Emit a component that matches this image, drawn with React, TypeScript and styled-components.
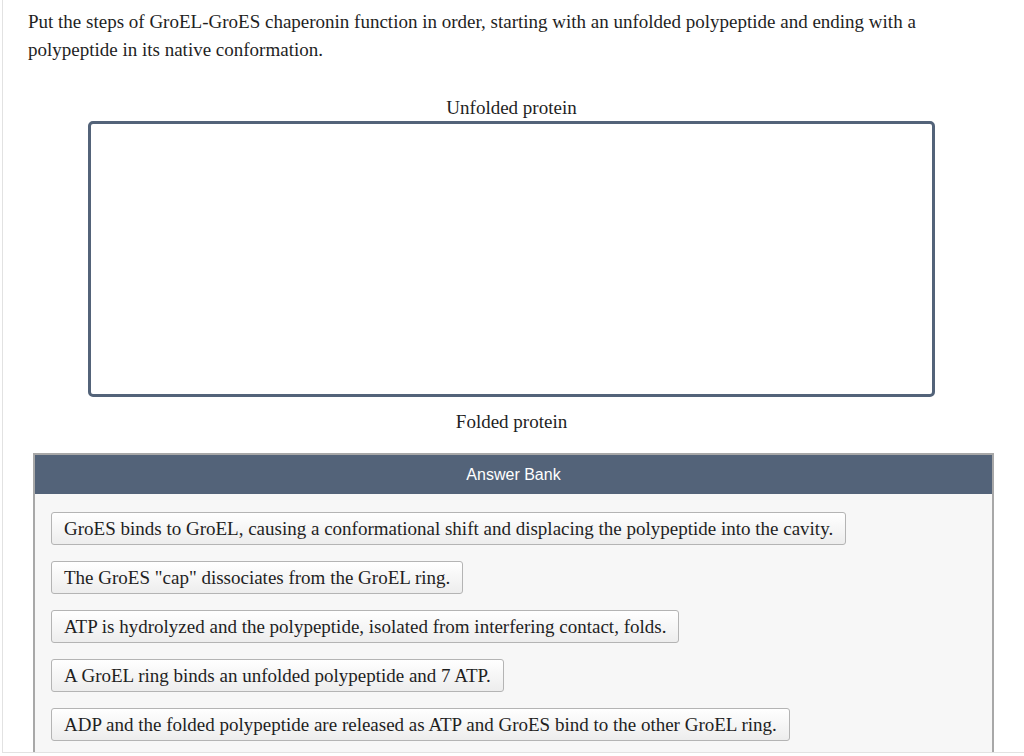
import styled, { createGlobalStyle } from "styled-components";

const GlobalStyle = createGlobalStyle`
  html, body {
    margin: 0;
    padding: 0;
    background: #ffffff;
  }
  body {
    font-family: "Liberation Serif", "Times New Roman", serif;
    color: #1f1f1f;
  }
`;

const colors = {
  slate: "#536379",
  bankBorder: "#a8a8a8",
  bankBg: "#f7f7f7",
  pageLine: "#e2e2e2",
  buttonBorder: "#b4b4b4",
};

const Page = styled.div`
  margin-left: 2px;
  height: 753px;
  box-sizing: border-box;
  border-left: 1px solid ${colors.pageLine};
  border-bottom: 1px solid ${colors.pageLine};
  padding: 8px 29px 0 25px;
  overflow: hidden;
`;

const Question = styled.p`
  margin: 0;
  font-size: 19px;
  line-height: 28px;
  max-width: 905px;
`;

const Label = styled.div`
  text-align: center;
  font-size: 19px;
  line-height: 22px;
`;

const TopLabel = styled(Label)`
  margin-top: 33px;
`;

const BottomLabel = styled(Label)`
  margin-top: 14px;
`;

const DropZone = styled.div`
  width: 847px;
  height: 276px;
  box-sizing: border-box;
  margin: 2px auto 0;
  border: 3px solid ${colors.slate};
  border-radius: 5px;
  background: #ffffff;
`;

const Bank = styled.section`
  margin: 20px 1px 0 5px;
  border: 2px solid ${colors.bankBorder};
  border-bottom: none;
  background: ${colors.bankBg};
  height: 320px;
`;

const BankHeader = styled.div`
  height: 39px;
  background: ${colors.slate};
  color: #ffffff;
  font-family: "Liberation Sans", Arial, sans-serif;
  font-size: 16px;
  line-height: 39px;
  text-align: center;
`;

const Choices = styled.div`
  display: flex;
  flex-direction: column;
  align-items: flex-start;
  gap: 16px;
  padding: 18px 16px;
`;

const Choice = styled.button`
  font-family: "Liberation Serif", "Times New Roman", serif;
  font-size: 19px;
  line-height: 21px;
  color: #1f1f1f;
  padding: 5px 12px;
  border: 1px solid ${colors.buttonBorder};
  border-radius: 3px;
  background: linear-gradient(#ffffff, #ededed);
  cursor: grab;
  text-align: left;
`;

const steps = [
  "GroES binds to GroEL, causing a conformational shift and displacing the polypeptide into the cavity.",
  'The GroES "cap" dissociates from the GroEL ring.',
  "ATP is hydrolyzed and the polypeptide, isolated from interfering contact, folds.",
  "A GroEL ring binds an unfolded polypeptide and 7 ATP.",
  "ADP and the folded polypeptide are released as ATP and GroES bind to the other GroEL ring.",
];

const App: React.FC = () => {
  return (
    <>
      <GlobalStyle />
      <Page>
        <Question>
          Put the steps of GroEL-GroES chaperonin function in order, starting with an unfolded
          polypeptide and ending with a polypeptide in its native conformation.
        </Question>
        <TopLabel>Unfolded protein</TopLabel>
        <DropZone />
        <BottomLabel>Folded protein</BottomLabel>
        <Bank>
          <BankHeader>Answer Bank</BankHeader>
          <Choices>
            {steps.map((step, index) => (
              <Choice key={index}>{step}</Choice>
            ))}
          </Choices>
        </Bank>
      </Page>
    </>
  );
};

export default App;
